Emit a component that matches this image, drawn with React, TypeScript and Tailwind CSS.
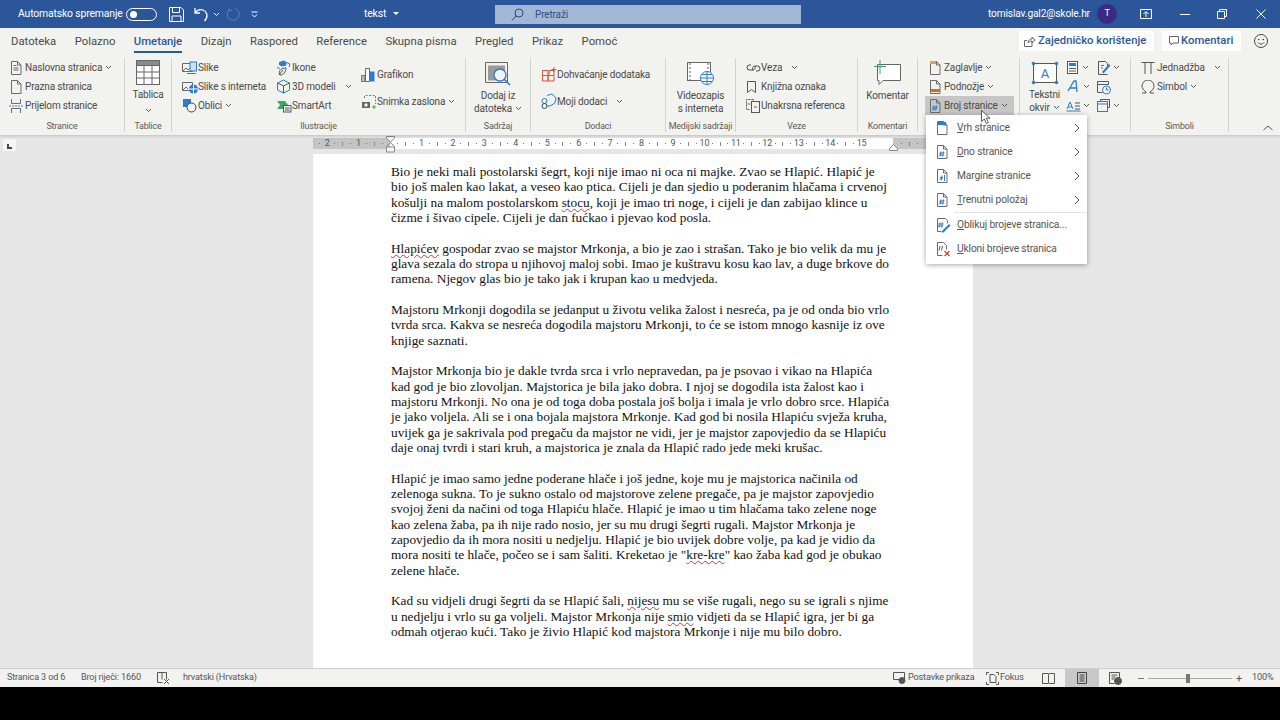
import React from "react";

const G = "#6a6a6a";
const B = "#2b7cd3";

function S({ w = 16, h = 16, vb, children, className = "" }: { w?: number; h?: number; vb?: string; children: React.ReactNode; className?: string }) {
  return (
    <svg width={w} height={h} viewBox={vb || `0 0 ${w} ${h}`} fill="none" strokeWidth="1" className={"shrink-0 " + className}>
      {children}
    </svg>
  );
}

const Page = ({ extra }: { extra?: React.ReactNode }) => (
  <S w={14} h={16}>
    <path d="M2.5 1.5h6l3.5 3.5v9.500h-9.500z M8.500 1.500v3.500h3.500" stroke={G} />
    {extra}
  </S>
);

const Chev = ({ c = "#555" }: { c?: string }) => (
  <svg width="7" height="5" viewBox="0 0 7 5" fill="none" className="shrink-0"><path d="M1 1l2.500 2.500L6 1" stroke={c} /></svg>
);

const ICONS: Record<string, React.ReactNode> = {
  cover: <Page extra={<path d="M4.500 5.500h3M4.500 8h5M4.500 10h5" stroke={G} />} />,
  blank: <Page />,
  brk: (
    <S w={14} h={16}>
      <path d="M2.500 1v4.500h9V1M2.500 15v-4.500h9V15" stroke={G} />
      <path d="M0 8h14" stroke={B} strokeDasharray="2 1" />
    </S>
  ),
  pic: (
    <S w={15} h={15}>
      <path d="M.5 3.500h10v8H.5z" stroke={G} />
      <path d="M1 11l3-3 2 2 2-2" stroke={G} />
      <rect x="8" y="2" width="6.500" height="9" fill="#cfe2f5" stroke={B} />
      <path d="M5 13.500h9" stroke={B} />
    </S>
  ),
  picnet: (
    <S w={16} h={15}>
      <path d="M.5 3.500h10v8H.5z" stroke={G} />
      <path d="M1 11l3-3 2 2" stroke={G} />
      <circle cx="11.500" cy="10" r="4.500" fill={B} />
      <path d="M7 10h9M11.500 5.500v9" stroke="#fff" />
    </S>
  ),
  shapes: (
    <S w={15} h={15}>
      <rect x="1" y="1" width="8" height="8" fill={B} />
      <circle cx="9.500" cy="9.500" r="4.500" fill="#f3f3ef" stroke="#444" />
    </S>
  ),
  icons: (
    <S w={15} h={16}>
      <path d="M3 2l5-1.500 3 2-1 3-4 1-3-1.500z" fill={B} />
      <path d="M11 2.500l3 1.500-1 3" stroke={B} />
      <path d="M4 15c-2-3 0-7 6-7-.5 4-2 7-6 7zM3 15l4-5" stroke="#4d4d4d" />
      <path d="M1 7l3 2" stroke={B} />
    </S>
  ),
  model: (
    <S w={15} h={15}>
      <path d="M7.500 1l6 3v7l-6 3-6-3V4z" stroke={B} />
      <path d="M1.500 4l6 3 6-3M7.500 7v7" stroke="#555" />
    </S>
  ),
  smart: (
    <S w={16} h={14}>
      <path d="M1 2h8l3 4-3 4H1l3-4z" fill="#3fa66a" />
      <rect x="7.500" y="6.500" width="7.500" height="6.500" fill="#f3f3ef" stroke="#555" />
      <path d="M9 9h4.500M9 11h4.500" stroke="#555" />
    </S>
  ),
  chart: (
    <S w={15} h={15} vb="0 0 15 15">
      <path d="M.5 8.500h3.500v6H.5z" fill="#bdbdbd" stroke="#777" />
      <path d="M4.500 1.500h4v13h-4z" fill="#fff" stroke="#666" />
      <path d="M9 4.500h4.500v10H9z" fill={B} />
    </S>
  ),
  snip: (
    <S w={16} h={15}>
      <path d="M3.500 4V1.500h11V10" stroke="#777" strokeDasharray="2 1.500" />
      <rect x="1" y="8" width="8" height="6" fill="#666" />
      <circle cx="5" cy="11" r="1.700" fill="#f3f3ef" />
      <path d="M11 13h4M13 11v4" stroke="#3fa66a" />
    </S>
  ),
  store: (
    <S w={16} h={16}>
      <path d="M1.500 3.500h5.500v5H1.500zM1.500 8.500H7v5.500H1.500zM7 8.500h6v5.500H7zM8 3.500h5V8.500H8z" stroke="#d0573a" />
      <path d="M11 3.500H16M13.500 1v5" stroke="#d0573a" transform="translate(-.5 -1)" />
    </S>
  ),
  addins: (
    <S w={16} h={16}>
      <path d="M6 2.500l5-1.500 4 4-1 5-5 3H6" stroke={B} />
      <circle cx="3.500" cy="8" r="2.500" stroke={B} />
      <circle cx="3.500" cy="13" r="2.500" stroke="#444" />
    </S>
  ),
  link: (
    <S w={15} h={12}>
      <path d="M5 3H3.500a2.500 2.500 0 000 5H7a2.500 2.500 0 002-3.500" stroke="#444" />
      <path d="M7 8a2.500 2.500 0 012-4h2.500a2.500 2.500 0 010 5H10" stroke="#444" />
    </S>
  ),
  book: (
    <S w={11} h={14}>
      <path d="M1.500 1.500h8v11l-4-3-4 3z" stroke="#555" />
    </S>
  ),
  cross: (
    <S w={14} h={15}>
      <path d="M3.500 11.500h-3v-10h7v2" stroke="#555" strokeDasharray="2 1" />
      <rect x="5.500" y="3.500" width="8" height="11" stroke="#555" />
      <path d="M8 9h3" stroke="#d0402f" />
      <path d="M1.500 6h3" stroke="#d0402f" />
    </S>
  ),
  header: <Page extra={<rect x="2" y="1" width="6" height="3" fill="#e8a33d" />} />,
  footer: <Page extra={<rect x="3" y="10" width="9" height="3" fill="#d76b2c" />} />,
  num: <Page extra={<path d="M6 7.500l-1 5M8.500 7.500l-1 5M4.500 9h5M4 11h5" stroke={B} />} />,
  top: <Page extra={<rect x="2" y="2" width="9" height="3" fill={B} />} />,
  margin: <Page extra={<path d="M9.500 7v6M7 7.500l-1 5M5 9.500h3M4.500 11h3" stroke={B} />} />,
  format: (
    <S w={16} h={16}>
      <path d="M2.500 1.500h8l2 2v3M2.500 1.500v13h4" stroke={G} />
      <path d="M5 5.500l-1 5M7.500 5.500l-1 5M3.500 7h5M3 9h5" stroke={B} />
      <path d="M7 14l7-7 1.500 1.500-7 7H7z" fill={B} />
    </S>
  ),
  remove: (
    <S w={16} h={16}>
      <path d="M2.500 1.500h6l3 3v4M2.500 1.500v13h5" stroke={G} />
      <path d="M5 5l-1 4.500M7.500 5l-1 4.500" stroke="#555" />
      <path d="M9.500 10l5 5M14.500 10l-5 5" stroke="#d0402f" strokeWidth="1.200" />
    </S>
  ),
  pgs: (
    <S w={13} h={15}>
      <rect x="1.500" y="1.500" width="10" height="12" fill="#fff" stroke="#555" />
      <rect x="3" y="3" width="7" height="3" fill={B} />
      <path d="M3 8.500h7M3 11h7" stroke="#555" />
    </S>
  ),
  art: (
    <S w={15} h={15}>
      <path d="M2 12L8 2h2l1 11M4 9h7" stroke={B} strokeWidth="1.300" />
    </S>
  ),
  drop: (
    <S w={15} h={14}>
      <path d="M.5 12h14" stroke={B} />
      <path d="M1 10l3-7 3 7M2 8h4" stroke={B} />
      <path d="M9 4h5M9 7h5M9 10h5" stroke="#555" />
    </S>
  ),
  sig: (
    <S w={16} h={16}>
      <path d="M2.500 1.500h7l2 2v3M2.500 1.500v13h9" stroke="#555" />
      <path d="M5 5.500h3M5 8h2" stroke={G} />
      <path d="M6 12l7-8 1.500 1.500-7 8z" fill={B} />
    </S>
  ),
  date: (
    <S w={15} h={16}>
      <path d="M1.500 2.500h11v3h-11zM1.500 5.500v8h5" stroke="#555" />
      <circle cx="10.500" cy="11" r="4" fill="#f3f3ef" stroke={B} />
      <path d="M10.500 8.500V11h2" stroke={B} />
    </S>
  ),
  obj: (
    <S w={15} h={15}>
      <path d="M4.500 3.500v-2h9v8h-2" stroke="#555" />
      <rect x="1.500" y="3.500" width="10" height="10" stroke={B} />
      <path d="M1.500 6h10" stroke={B} />
    </S>
  ),
};

function Btn({ icon, label, chev, gap = 3, chevGap = 3, w, h = "h-[19.500px]", ml = "" }: { icon: string; label?: string; chev?: boolean; gap?: number; chevGap?: number; w?: string; h?: string; ml?: string }) {
  return (
    <div className={`flex items-center ${h} ${w || ""} ${ml}`}>
      {ICONS[icon]}
      {label && <span style={{ marginLeft: gap }} className="whitespace-nowrap">{label}</span>}
      {chev && <span style={{ marginLeft: chevGap }} className="flex"><Chev /></span>}
    </div>
  );
}

function Group({ w, label, children, last }: { w: string; label: string; children: React.ReactNode; last?: boolean }) {
  return (
    <section className={`${w} h-[74px] mt-[2px] flex flex-col shrink-0 ${last ? "" : "border-r border-[#d2d2d0]"}`}>
      <div className="h-[57px] flex">{children}</div>
      <div className="h-[17px] pt-[7px] flex items-center justify-center text-[8.900px] text-[#5a5a5a] whitespace-nowrap">{label}</div>
    </section>
  );
}

const Col = ({ children, cls = "" }: { children: React.ReactNode; cls?: string }) => (
  <div className={`flex flex-col justify-center ${cls}`}>{children}</div>
);

const BigLabel = ({ l1, l2, chev }: { l1: string; l2?: React.ReactNode; chev?: boolean }) => (
  <div className="flex flex-col items-center leading-[13px] mt-[2.500px]">
    <span className="whitespace-nowrap">{l1}</span>
    {l2 && <span className="whitespace-nowrap flex items-center gap-[3px]">{l2}{chev && <Chev />}</span>}
  </div>
);

function Wavy({ children }: { children: React.ReactNode }) {
  return <span className="underline decoration-wavy decoration-[#d0352b] decoration-[1px] underline-offset-[1px]">{children}</span>;
}

const paragraphs: React.ReactNode[][] = [
  [
    "Bio je neki mali postolarski šegrt, koji nije imao ni oca ni majke. Zvao se Hlapić. Hlapić je",
    "bio još malen kao lakat, a veseo kao ptica. Cijeli je dan sjedio u poderanim hlačama i crvenoj",
    <>košulji na malom postolarskom <Wavy>stocu</Wavy>, koji je imao tri noge, i cijeli je dan zabijao klince u</>,
    "čizme i šivao cipele. Cijeli je dan fućkao i pjevao kod posla.",
  ],
  [
    <><Wavy>Hlapićev</Wavy> gospodar zvao se majstor Mrkonja, a bio je zao i strašan. Tako je bio velik da mu je</>,
    "glava sezala do stropa u njihovoj maloj sobi. Imao je kuštravu kosu kao lav, a duge brkove do",
    "ramena. Njegov glas bio je tako jak i krupan kao u medvjeda.",
  ],
  [
    "Majstoru Mrkonji dogodila se jedanput u životu velika žalost i nesreća, pa je od onda bio vrlo",
    "tvrda srca. Kakva se nesreća dogodila majstoru Mrkonji, to će se istom mnogo kasnije iz ove",
    "knjige saznati.",
  ],
  [
    "Majstor Mrkonja bio je dakle tvrda srca i vrlo nepravedan, pa je psovao i vikao na Hlapića",
    "kad god je bio zlovoljan. Majstorica je bila jako dobra. I njoj se dogodila ista žalost kao i",
    "majstoru Mrkonji. No ona je od toga doba postala još bolja i imala je vrlo dobro srce. Hlapića",
    "je jako voljela. Ali se i ona bojala majstora Mrkonje. Kad god bi nosila Hlapiću svježa kruha,",
    "uvijek ga je sakrivala pod pregaču da majstor ne vidi, jer je majstor zapovjedio da se Hlapiću",
    "daje onaj tvrdi i stari kruh, a majstorica je znala da Hlapić rado jede meki krušac.",
  ],
  [
    "Hlapić je imao samo jedne poderane hlače i još jedne, koje mu je majstorica načinila od",
    "zelenoga sukna. To je sukno ostalo od majstorove zelene pregače, pa je majstor zapovjedio",
    "svojoj ženi da načini od toga Hlapiću hlače. Hlapić je imao u tim hlačama tako zelene noge",
    "kao zelena žaba, pa ih nije rado nosio, jer su mu drugi šegrti rugali. Majstor Mrkonja je",
    "zapovjedio da ih mora nositi u nedjelju. Hlapić je bio uvijek dobre volje, pa kad je vidio da",
    <>mora nositi te hlače, počeo se i sam šaliti. Kreketao je "<Wavy>kre-kre</Wavy>" kao žaba kad god je obukao</>,
    "zelene hlače.",
  ],
  [
    <>Kad su vidjeli drugi šegrti da se Hlapić šali, <Wavy>nijesu</Wavy> mu se više rugali, nego su se igrali s njime</>,
    <>u nedjelju i vrlo su ga voljeli. Majstor Mrkonja nije <Wavy>smio</Wavy> vidjeti da se Hlapić igra, jer bi ga</>,
    "odmah otjerao kući. Tako je živio Hlapić kod majstora Mrkonje i nije mu bilo dobro.",
  ],
];

const tabs = ["Datoteka", "Polazno", "Umetanje", "Dizajn", "Raspored", "Reference", "Skupna pisma", "Pregled", "Prikaz", "Pomoć"];

function RulerCell({ n }: { n: number }) {
  const sub = "w-1/4 flex justify-end items-center";
  const mark = "w-0 flex justify-center";
  return (
    <div className="w-[31.450px] shrink-0 flex h-full">
      <div className={sub}><div className={mark}><i className="block w-[1px] h-[1px] bg-[#777] shrink-0" /></div></div>
      <div className={sub}><div className={mark}><i className="block w-[1px] h-[4px] bg-[#888] shrink-0" /></div></div>
      <div className={sub}><div className={mark}><i className="block w-[1px] h-[1px] bg-[#777] shrink-0" /></div></div>
      <div className={sub}><div className={mark}><span className="text-[9px] text-[#555] leading-none">{n}</span></div></div>
    </div>
  );
}

function MenuItem({ icon, u, rest, arrow }: { icon: string; u: string; rest: string; arrow?: boolean }) {
  return (
    <div className="h-[24px] flex items-center pl-[9px] pr-[6px]">
      <div className="w-[22px] flex">{ICONS[icon]}</div>
      <span className="whitespace-nowrap text-[#555]"><span className="underline underline-offset-1">{u}</span>{rest}</span>
      {arrow && (
        <svg width="6" height="10" viewBox="0 0 6 10" fill="none" className="ml-auto mr-[1px]"><path d="M1 1l4 4-4 4" stroke="#555" /></svg>
      )}
    </div>
  );
}

export default function App() {
  return (
    <div className="w-[1280px] h-[720px] overflow-hidden relative flex flex-col bg-black text-[10px] tracking-[-0.15px] text-[#4a4a4a]" style={{ fontFamily: 'Roboto, "Noto Sans", sans-serif' }}>
      {/* Title bar */}
      <header className="h-[28px] shrink-0 bg-[#2b579a] flex items-center text-white pl-[18px] text-[10.400px]">
        <span className="whitespace-nowrap w-[106px] shrink-0">Automatsko spremanje</span>
        <div className="w-[31px] h-[13px] rounded-full border border-white flex items-center pl-[3px] ml-[2px] shrink-0">
          <div className="w-[7px] h-[7px] rounded-full bg-white" />
        </div>
        <svg width="15" height="15" viewBox="0 0 15 15" fill="none" stroke="#fff" className="ml-[12px] shrink-0"><path d="M.5.5h11.500l2.500 2.500v11.500H.5zM3.500.5v5h7v-5M3 14.500V9h9v5.500" /></svg>
        <svg width="16" height="15" viewBox="0 0 16 15" fill="none" stroke="#fff" strokeWidth="1.300" className="ml-[10px] shrink-0"><path d="M1 1v5h5M1 6c2-3 5-4 8-3 4 1.500 5 6 3 9l-1.500 2" /></svg>
        <svg width="7" height="5" viewBox="0 0 7 5" fill="none" className="ml-[3px] shrink-0"><path d="M1 1l2.500 2.500L6 1" stroke="#fff" /></svg>
        <svg width="14" height="14" viewBox="0 0 14 14" fill="none" stroke="#5c7fb5" className="ml-[6px] shrink-0"><path d="M9 1.500A6 6 0 1 1 3 3M3 .5v3h3" /></svg>
        <svg width="7" height="7" viewBox="0 0 7 7" fill="none" stroke="#fff" className="ml-[11px] shrink-0"><path d="M.5 1h6M1 3.500l2.500 2.500L6 3.500" /></svg>
        <span className="ml-[106px] w-[25px] shrink-0">tekst</span>
        <svg width="6" height="4" viewBox="0 0 6 4" className="ml-[4px] shrink-0"><path d="M0 0h6L3 3z" fill="#fff" /></svg>
        <div className="ml-[96px] w-[306px] h-[19px] bg-[#a3b7d5] flex items-center pl-[16px] text-[#2b4f86] shrink-0">
          <svg width="13" height="13" viewBox="0 0 13 13" fill="none" stroke="#274a80"><circle cx="8" cy="5" r="4" /><path d="M5 8l-4 4.500" /></svg>
          <span className="ml-[11px] text-[10px]">Pretraži</span>
        </div>
        <span className="ml-[187px] whitespace-nowrap w-[101px] shrink-0 text-[10.200px]">tomislav.gal2@skole.hr</span>
        <div className="ml-[8px] w-[20px] h-[20px] rounded-full bg-[#3a2a85] flex items-center justify-center text-[9px] shrink-0">T</div>
        <svg width="12" height="10" viewBox="0 0 12 10" className="ml-[23px] shrink-0" fill="none" stroke="#fff"><path d="M.5.500h11v9H.5z" /><path d="M6 8V3M3.500 5L6 2.500 8.500 5" /></svg>
        <div className="ml-[28px] w-[10px] h-[1px] bg-white shrink-0" />
        <svg width="10" height="10" viewBox="0 0 10 10" className="ml-[27px] shrink-0" fill="none" stroke="#fff"><path d="M.5 2.500h7v7h-7zM2.500 2.500v-2h7v7h-2" /></svg>
        <svg width="10" height="10" viewBox="0 0 10 10" className="ml-[29px] shrink-0" fill="none" stroke="#fff"><path d="M.5.500l9 9M9.500.5l-9 9" /></svg>
      </header>

      {/* Ribbon */}
      <div className="h-[107px] shrink-0 bg-[#f2f2ef] flex flex-col shadow-[0_1px_3px_rgba(0,0,0,0.18)] relative z-10">
        <div className="h-[28px] flex items-start pl-[11px] relative">
          <nav className="flex gap-[18.500px] text-[11.300px] tracking-normal pt-[6px]">
            {tabs.map((t) =>
              t === "Umetanje" ? (
                <span key={t} className="relative font-medium text-[#2b579a] whitespace-nowrap">
                  {t}
                  <i className="absolute left-0 right-0 top-[17px] h-[2px] bg-[#2b579a]" />
                </span>
              ) : (
                <span key={t} className="whitespace-nowrap">{t}</span>
              ),
            )}
          </nav>
          <div className="ml-auto flex items-center pt-[3px] pr-[12px] tracking-normal">
            <div className="h-[20px] w-[135px] bg-white flex items-center pl-[5px] gap-[3px] text-[#2b579a] font-medium text-[11.300px] whitespace-nowrap">
              <svg width="11" height="11" viewBox="0 0 11 11" fill="none" stroke="#666"><path d="M8 5.500v5H.5v-6H3M4 7c0-3 2-4 4-4V1l3 3-3 3V5c-2 0-3 1-4 2z" /></svg>
              Zajedničko korištenje
            </div>
            <div className="ml-[8px] h-[20px] w-[79px] bg-white flex items-center pl-[7px] gap-[2px] text-[#2b579a] font-medium text-[11.300px]">
              <svg width="10" height="10" viewBox="0 0 10 10" fill="none" stroke="#666"><path d="M.5.500h9v6.500H4L2 9V7H.5z" /></svg>
              Komentari
            </div>
            <svg width="14" height="14" viewBox="0 0 14 14" fill="none" stroke="#444" className="ml-[13px]"><circle cx="7" cy="7" r="6.500" /><circle cx="4.800" cy="5.500" r=".8" fill="#444" stroke="none" /><circle cx="9.200" cy="5.500" r=".8" fill="#444" stroke="none" /><path d="M4 8.500c1.500 2 4.500 2 6 0" /></svg>
          </div>
        </div>

        <div className="h-[79px] flex relative">
          <Group w="w-[125px]" label="Stranice">
            <Col cls="pl-[9px]">
              <Btn icon="cover" label="Naslovna stranica" chev gap={2} />
              <Btn icon="blank" label="Prazna stranica" gap={2} />
              <Btn icon="brk" label="Prijelom stranice" gap={2} />
            </Col>
          </Group>
          <Group w="w-[47px]" label="Tablice">
            <div className="flex-1 flex flex-col items-center pt-[2px]">
              <svg width="24" height="25" viewBox="0 0 24 25" fill="none" stroke="#666"><rect x=".5" y=".5" width="23" height="24" fill="#fff" /><rect x=".5" y=".5" width="23" height="5" fill="#8a8a8a" /><path d="M8 5v19M16 5v19M1 12h22M1 18h22" /></svg>
              <BigLabel l1="Tablica" />
              <span className="mt-[7px]"><Chev /></span>
            </div>
          </Group>
          <Group w="w-[294px]" label="Ilustracije">
            <Col cls="pl-[10px] w-[104px] shrink-0">
              <Btn icon="pic" label="Slike" gap={1} />
              <Btn icon="picnet" label="Slike s interneta" gap={0} />
              <Btn icon="shapes" label="Oblici" chev gap={1} />
            </Col>
            <Col cls="w-[85px] shrink-0">
              <Btn icon="icons" label="Ikone" gap={1} />
              <div className="flex items-center h-[19.500px]">{ICONS.model}<span className="ml-[1px] whitespace-nowrap">3D modeli</span><span className="ml-[9px]"><Chev /></span></div>
              <Btn icon="smart" label="SmartArt" gap={0} />
            </Col>
            <Col cls="gap-[7px] pt-[3px]">
              <Btn icon="chart" label="Grafikon" gap={1} />
              <Btn icon="snip" label="Snimka zaslona" chev gap={0} />
            </Col>
          </Group>
          <Group w="w-[65px]" label="Sadržaj">
            <div className="flex-1 flex flex-col items-center pt-[4px]">
              <svg width="26" height="24" viewBox="0 0 26 24" fill="none"><path d="M.5.500h22v20H.5z" stroke="#666" /><path d="M3 3.500h17v15H3z" fill="#9a9a9a" /><circle cx="15" cy="13" r="6" fill="#f2f2ef" stroke={B} strokeWidth="1.300" /><path d="M19 17l6 6" stroke={B} strokeWidth="1.500" /></svg>
              <BigLabel l1="Dodaj iz" l2="datoteka" chev />
            </div>
          </Group>
          <Group w="w-[135px]" label="Dodaci">
            <Col cls="pl-[10px] gap-[7px] pt-[3px]">
              <Btn icon="store" label="Dohvaćanje dodataka" gap={0} />
              <Btn icon="addins" label="Moji dodaci" chev gap={0} chevGap={9} />
            </Col>
          </Group>
          <Group w="w-[70px]" label="Medijski sadržaji">
            <div className="flex-1 flex flex-col items-center pt-[4px]">
              <svg width="28" height="24" viewBox="0 0 28 24" fill="none"><rect x=".5" y=".5" width="23" height="18" fill="#fff" stroke="#666" /><path d="M3 1v17M21 1v17" stroke="#555" strokeDasharray="2 2" /><circle cx="20" cy="16" r="6.500" fill="#fff" stroke={B} /><path d="M13.500 16h13M20 9.500v13M15 12.500h10M15 19.500h10" stroke={B} /></svg>
              <BigLabel l1="Videozapis" l2="s interneta" />
            </div>
          </Group>
          <Group w="w-[122px]" label="Veze">
            <Col cls="pl-[10px]">
              <Btn icon="link" label="Veza" chev gap={0} chevGap={9} />
              <Btn icon="book" label="Knjižna oznaka" gap={4} />
              <Btn icon="cross" label="Unakrsna referenca" gap={1} />
            </Col>
          </Group>
          <Group w="w-[60px]" label="Komentari">
            <div className="flex-1 flex flex-col items-center pt-[2px]">
              <svg width="28" height="26" viewBox="0 0 28 26" fill="none"><path d="M3.500 4.500h23v16H9l-4 4v-4H3.500z" fill="#fff" stroke="#666" /><path d="M0 6.500h12M6 0v14" stroke="#3fa66a" /></svg>
              <BigLabel l1="Komentar" />
            </div>
          </Group>
          <Group w="w-[102px]" label="">
            <Col cls="pl-[10px]">
              <Btn icon="header" label="Zaglavlje" chev gap={2} />
              <Btn icon="footer" label="Podnožje" chev gap={2} />
              <div className="-ml-[3px] w-[89px] h-[19.500px] pl-[3px] bg-[#c6c6c6] flex items-center">
                {ICONS.num}
                <span className="ml-[2px] whitespace-nowrap">Broj stranice</span>
                <span className="ml-[3px]"><Chev /></span>
              </div>
            </Col>
          </Group>
          <Group w="w-[111px]" label="">
            <div className="flex flex-col items-center w-[46px] shrink-0 pl-[3px] pt-[3px]">
              <svg width="28" height="24" viewBox="0 0 28 24" fill="none"><rect x="2.500" y="2.500" width="23" height="19" fill="#fff" stroke="#555" /><text x="14" y="17" textAnchor="middle" fontSize="13" fill={B} fontFamily="Roboto">A</text><g fill={B}><circle cx="2.500" cy="2.500" r="1.800" /><circle cx="25.500" cy="2.500" r="1.800" /><circle cx="2.500" cy="21.500" r="1.800" /><circle cx="25.500" cy="21.500" r="1.800" /></g></svg>
              <BigLabel l1="Tekstni" l2="okvir" chev />
            </div>
            <Col cls="w-[30px] shrink-0">
              <Btn icon="pgs" chev chevGap={3} />
              <Btn icon="art" chev chevGap={2} />
              <Btn icon="drop" chev chevGap={2} />
            </Col>
            <Col>
              <Btn icon="sig" chev chevGap={1} />
              <Btn icon="date" />
              <Btn icon="obj" chev chevGap={2} />
            </Col>
          </Group>
          <Group w="w-[98px]" label="Simboli">
            <Col cls="pl-[10px]">
              <div className="flex items-center h-[19.500px]">
                <svg width="14" height="14" viewBox="0 0 14 14" fill="none" stroke="#555" className="shrink-0"><path d="M.5 1.500h13M4 1.500V13M10 1.500V13" /></svg>
                <span className="ml-[2px]">Jednadžba</span><span className="ml-[9px]"><Chev /></span>
              </div>
              <div className="flex items-center h-[19.500px]">
                <svg width="14" height="14" viewBox="0 0 14 14" fill="none" stroke="#555" className="shrink-0"><path d="M1 13h4v-1C2 10 1 8 1 6a6 6 0 0 1 12 0c0 2-1 4-4 6v1h4" /></svg>
                <span className="ml-[2px]">Simbol</span><span className="ml-[3px]"><Chev /></span>
              </div>
              <div className="h-[19.500px]" />
            </Col>
          </Group>
          <svg width="10" height="6" viewBox="0 0 10 6" fill="none" stroke="#555" className="absolute right-[7px] bottom-[4px]"><path d="M.5 5L5 1l4.500 4" /></svg>
        </div>
      </div>

      {/* Ruler row */}
      <div className="h-[19px] shrink-0 bg-[#e6e6e6] flex pt-[3px] relative">
        <div className="ml-[3px] w-[13px] h-[12px] mt-[1px] bg-[#f5f5f5] flex items-end justify-center pb-[2px] shrink-0">
          <div className="w-[5px] h-[5px] border-l-2 border-b-2 border-[#444]" />
        </div>
        <div className="ml-[297px] w-[660px] h-[11px] flex shrink-0">
          <div className="w-[77px] bg-[#c4c4c4] flex flex-row-reverse overflow-hidden shrink-0">
            {[1, 2, 0].map((n) => (
              <div key={n} className="flex flex-row-reverse w-[31.450px] h-full shrink-0">
                <div className="w-1/4 flex justify-start items-center"><div className="w-0 flex justify-center"><i className="block w-[1px] h-[1px] bg-[#777] shrink-0" /></div></div>
                <div className="w-1/4 flex justify-start items-center"><div className="w-0 flex justify-center"><i className="block w-[1px] h-[4px] bg-[#888] shrink-0" /></div></div>
                <div className="w-1/4 flex justify-start items-center"><div className="w-0 flex justify-center"><i className="block w-[1px] h-[1px] bg-[#777] shrink-0" /></div></div>
                <div className="w-1/4 flex justify-start items-center"><div className="w-0 flex justify-center">{n > 0 && <span className="text-[9px] text-[#555] leading-none">{n}</span>}</div></div>
              </div>
            ))}
          </div>
          <div className="w-[503px] bg-white flex overflow-hidden shrink-0">
            {Array.from({ length: 15 }, (_, i) => <RulerCell key={i} n={i + 1} />)}
          </div>
          <div className="flex-1 bg-[#c4c4c4] flex items-center pl-[8px] gap-[7px]">
            <i className="block w-[1px] h-[1px] bg-[#777]" />
            <i className="block w-[1px] h-[4px] bg-[#888]" />
            <i className="block w-[1px] h-[1px] bg-[#777]" />
            <span className="text-[9px] text-[#555] leading-[11px]">1</span>
          </div>
        </div>
        {/* Margin handles */}
        <svg width="9" height="17" viewBox="0 0 9 17" fill="#f7f7f7" stroke="#888" className="absolute left-[386px] top-[1px]"><path d="M.5.500h8v1.500L4.500 6 .5 2zM4.500 6.500l4 4v0l-4-4-4 4zM.5 11h8v5H.5z" /></svg>
        <svg width="9" height="7" viewBox="0 0 9 7" fill="#f7f7f7" stroke="#888" className="absolute left-[889px] top-[9px]"><path d="M4.500.5l4 4v2h-8v-2z" /></svg>
      </div>

      {/* Document */}
      <main className="h-[515px] shrink-0 bg-[#e6e6e6] border-b border-[#cfcfcf]">
        <article className="ml-[313px] w-[660px] h-full bg-white pl-[78px] pt-[10px] text-[#111] text-[13.300px] leading-[15.330px] tracking-normal" style={{ fontFamily: '"Liberation Serif", serif' }}>
          {paragraphs.map((p, i) => (
            <div key={i} className="mb-[15.330px]">
              {p.map((l, j) => (
                <div key={j} className="whitespace-nowrap">{l}</div>
              ))}
            </div>
          ))}
        </article>
      </main>

      {/* Status bar */}
      <footer className="h-[18px] shrink-0 bg-[#f2f2f0] flex items-center text-[9.100px] text-[#555] pl-[7px] pr-[7px] whitespace-nowrap">
        <span className="w-[74px] shrink-0">Stranica 3 od 6</span>
        <span className="w-[76px] shrink-0">Broj riječi: 1660</span>
        <svg width="13" height="13" viewBox="0 0 13 13" fill="none" stroke="#555" className="shrink-0"><path d="M.5.500h9v7M.5.500v10h5M5 .5v7M7 7l5 5M12 7l-5 5" /></svg>
        <span className="ml-[13px] shrink-0">hrvatski (Hrvatska)</span>
        <svg width="13" height="12" viewBox="0 0 13 12" fill="none" stroke="#555" className="ml-auto shrink-0"><path d="M.5.500h11v7H.5z" /><circle cx="9" cy="8.500" r="3" fill="#555" /></svg>
        <span className="ml-[2px] w-[64px] shrink-0">Postavke prikaza</span>
        <svg width="13" height="13" viewBox="0 0 13 13" fill="none" stroke="#555" className="ml-[14px] shrink-0"><path d="M4 2.500h4l2 2v6H4zM.5 3V.5H3M10 .5h2.500V3M.5 10v2.500H3M10 12.500h2.500V10" /></svg>
        <span className="ml-[1px] w-[22px] shrink-0">Fokus</span>
        <svg width="13" height="11" viewBox="0 0 13 11" fill="none" stroke="#555" className="ml-[20px] shrink-0"><path d="M.5.500h5.500l.5.5.5-.5h5.500v10H7l-.5.5-.5-.5H.5zM6.500 1v9" /></svg>
        <div className="ml-[10px] w-[34px] h-[18px] bg-[#c8c8c8] flex items-center justify-center shrink-0">
          <svg width="10" height="12" viewBox="0 0 10 12" fill="none" stroke="#444"><path d="M.5.500h9v11h-9zM2.500 3h5M2.500 5h5M2.500 7h5M2.500 9h5" /></svg>
        </div>
        <svg width="13" height="13" viewBox="0 0 13 13" fill="none" stroke="#555" className="ml-[10px] shrink-0"><path d="M.5.500h10v6M.5.500v11h5M2.500 3h6M2.500 5h4M2.500 7h3" /><circle cx="9" cy="9" r="3.500" fill="#555" /></svg>
        <div className="ml-[16px] flex items-center w-[102px] shrink-0">
          <div className="w-[6px] h-[1px] bg-[#777] shrink-0" />
          <div className="ml-[4px] w-[84px] h-[1px] bg-[#aaa] relative shrink-0">
            <i className="absolute left-[38px] -top-[4px] w-[4px] h-[9px] bg-[#777]" />
          </div>
          <div className="ml-[4px] text-[#555] text-[11px] leading-none">+</div>
        </div>
        <span className="ml-[12px] w-[21px] shrink-0">100%</span>
      </footer>
      <div className="flex-1 bg-black" />

      {/* Dropdown menu */}
      <div className="absolute left-[926px] top-[115px] w-[161px] h-[149px] bg-white z-20 shadow-[0_1px_5px_rgba(0,0,0,0.35)] pt-[1px] text-[10.250px]">
        <MenuItem icon="top" u="V" rest="rh stranice" arrow />
        <MenuItem icon="num" u="D" rest="no stranice" arrow />
        <MenuItem icon="margin" u="" rest="Margine stranice" arrow />
        <MenuItem icon="num" u="T" rest="renutni položaj" arrow />
        <div className="ml-[28px] h-px bg-[#e3e3e3]" />
        <MenuItem icon="format" u="O" rest="blikuj brojeve stranica..." />
        <MenuItem icon="remove" u="U" rest="kloni brojeve stranica" />
      </div>

      {/* Mouse pointer */}
      <svg width="11" height="15" viewBox="0 0 11 15" className="absolute left-[981px] top-[110px] z-30"><path d="M.5.500v11l2.800-2.500 2 4.500 2-1-2-4.300H9z" fill="#fff" stroke="#333" strokeWidth=".8" /></svg>
    </div>
  );
}
